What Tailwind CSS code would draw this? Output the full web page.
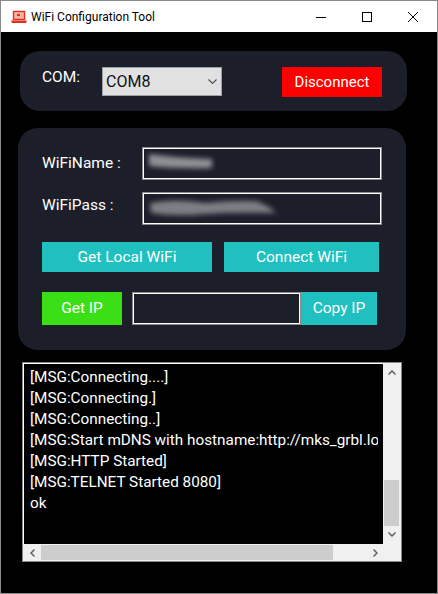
<!DOCTYPE html>
<html lang="en">
<head>
    <meta charset="UTF-8">
    <meta name="viewport" content="width=device-width, initial-scale=1.0">
    <title>WiFi Configuration Tool</title>
    <script src="https://cdn.jsdelivr.net/npm/@tailwindcss/browser@4"></script>
</head>
<body class="bg-black">
    <div class="w-[438px] h-[594px] flex flex-col overflow-hidden bg-black border border-[#8a8a8a] font-['Roboto',sans-serif] text-white">
        <!-- title bar -->
        <div class="h-[31px] shrink-0 bg-white flex items-center pl-[10px] text-black">
            <svg class="w-[16px] h-[14px] mr-[4px]" viewBox="0 0 16 14" fill="none">
                <rect x="2.5" y="1.5" width="11" height="8" fill="#f4b5a8" stroke="#e0301e" stroke-width="1.4"/>
                <rect x="6" y="4" width="3" height="2" fill="#e0301e"/>
                <path d="M0 10.5h16l-1 2.5H1z" fill="#e0301e"/>
            </svg>
            <span class="text-[12px] leading-none mt-[1px]">WiFi Configuration Tool</span>
            <div class="ml-auto flex items-center mr-[1px]">
                <svg class="w-[46px] h-[30px]" viewBox="0 0 46 30" stroke="#000" fill="none"><path d="M18 15.5h10"/></svg>
                <svg class="w-[46px] h-[30px]" viewBox="0 0 46 30" stroke="#000" fill="none"><rect x="18.5" y="10.5" width="9" height="9"/></svg>
                <svg class="w-[46px] h-[30px]" viewBox="0 0 46 30" stroke="#000" fill="none"><path d="M18 10l10 10M28 10L18 20"/></svg>
            </div>
        </div>

        <!-- com panel -->
        <div class="ml-[19px] mt-[19px] w-[387px] h-[60px] shrink-0 rounded-[20px] bg-[#1c1f2a] flex items-start pl-[22px] pt-[16px]">
            <span class="w-[60px] text-[15.5px] leading-[20px]">COM:</span>
            <div class="relative w-[120px] h-[29px]">
                <select class="w-full h-full appearance-none bg-[#e1e1e1] border border-[#a0a0a0] text-[#111] text-[16px] pl-[3px] font-['Roboto',sans-serif]">
                    <option>COM8</option>
                </select>
                <svg class="absolute right-[5px] top-[12px] w-[9px] h-[6px]" viewBox="0 0 9 6" fill="none" stroke="#555" stroke-width="1.2"><path d="M.5 .5l4 4 4-4"/></svg>
            </div>
            <button class="ml-[60px] w-[100px] h-[30px] bg-[#ff0000] text-[15px] pt-[1px]">Disconnect</button>
        </div>

        <!-- wifi panel -->
        <div class="ml-[17px] mt-[17px] w-[388px] h-[222px] shrink-0 rounded-[20px] bg-[#1c1f2a] pl-[24px] pt-[19px]">
            <div class="flex items-center h-[33px]">
                <span class="w-[100px] text-[15.5px]">WiFiName :</span>
                <div class="w-[240px] h-[33px] border-2 border-white outline outline-[#8a8a8a] -outline-offset-1 flex items-center pl-[2px]">
                    <svg class="w-[70px] h-[24px] -mt-[4px]" viewBox="0 0 70 24"><path class="blur-[2.5px]" d="M3 4 Q30 8 66 9 L66 18 Q30 19 3 16z" fill="#8f9196"/></svg>
                </div>
            </div>
            <div class="flex items-center h-[33px] mt-[12px]">
                <span class="w-[100px] text-[15.5px] -mt-[6px]">WiFiPass :</span>
                <div class="w-[240px] h-[33px] border-2 border-white outline outline-[#8a8a8a] -outline-offset-1 flex items-center pl-[2px]">
                    <svg class="w-[134px] h-[24px]" viewBox="0 0 134 24"><path class="blur-[2.5px]" d="M4 6 Q30 1 60 6 Q90 3 110 4 Q122 8 130 16 Q90 15 60 17 Q30 20 5 16z" fill="#7d7f84"/></svg>
                </div>
            </div>
            <div class="flex mt-[17px]">
                <button class="w-[170px] h-[30px] bg-[#20c0c0] text-[15.5px] pt-[1px]">Get Local WiFi</button>
                <button class="ml-[12px] w-[155px] h-[30px] bg-[#20c0c0] text-[15.5px] pt-[1px]">Connect WiFi</button>
            </div>
            <div class="flex mt-[20px]">
                <button class="w-[80px] h-[33px] bg-[#3adf16] text-[15.5px] pt-[1px]">Get IP</button>
                <div class="ml-[10px] w-[169px] h-[33px] border-2 border-white outline outline-[#8a8a8a] -outline-offset-1"></div>
                <button class="w-[76px] h-[33px] bg-[#20c0c0] text-[15.5px] pt-[1px]">Copy IP</button>
            </div>
        </div>

        <!-- log -->
        <div class="ml-[21px] mt-[12px] w-[380px] h-[200px] shrink-0 border border-[#8a8a8a] bg-[#f0f0f0] relative">
            <div class="w-[360px] h-[181px] bg-black border-t border-l border-white pl-[6px] pt-[3px] text-[15.3px] leading-[21px]">
                <div>[MSG:Connecting....]</div>
                <div>[MSG:Connecting.]</div>
                <div>[MSG:Connecting..]</div>
                <div class="w-[348px] overflow-hidden whitespace-nowrap">[MSG:Start mDNS with hostname:http://mks_grbl.local]</div>
                <div>[MSG:HTTP Started]</div>
                <div>[MSG:TELNET Started 8080]</div>
                <div>ok</div>
            </div>
            <!-- vertical scrollbar -->
            <div class="absolute right-0 top-0 w-[18px] h-[181px]">
                <svg class="absolute left-[5px] top-[7px] w-[8px] h-[5px]" viewBox="0 0 8 5" fill="none" stroke="#606060" stroke-width="1.5"><path d="M.5 4.5l3.5-3.5 3.5 3.5"/></svg>
                <div class="absolute left-[1px] top-[117px] w-[15px] h-[46px] bg-[#cdcdcd]"></div>
                <svg class="absolute left-[5px] top-[169px] w-[8px] h-[5px]" viewBox="0 0 8 5" fill="none" stroke="#606060" stroke-width="1.5"><path d="M.5 .5L4 4 7.5 .5"/></svg>
            </div>
            <!-- horizontal scrollbar -->
            <div class="absolute left-0 bottom-0 w-[362px] h-[17px]">
                <svg class="absolute left-[7px] top-[5px] w-[5px] h-[8px]" viewBox="0 0 5 8" fill="none" stroke="#606060" stroke-width="1.5"><path d="M4.5 .5L1 4l3.5 3.5"/></svg>
                <div class="absolute left-[18px] top-[1px] w-[292px] h-[15px] bg-[#cdcdcd]"></div>
                <svg class="absolute left-[350px] top-[5px] w-[5px] h-[8px]" viewBox="0 0 5 8" fill="none" stroke="#606060" stroke-width="1.5"><path d="M.5 .5L4 4 .5 7.5"/></svg>
            </div>
        </div>
    </div>
</body>
</html>
